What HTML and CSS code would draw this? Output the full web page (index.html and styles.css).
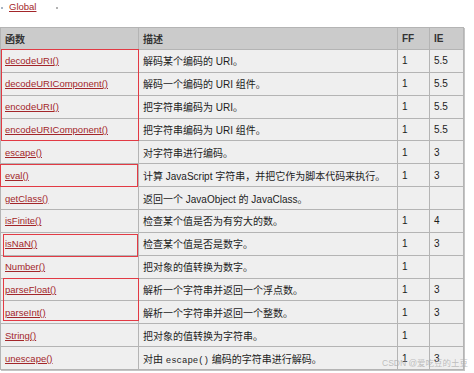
FILE: index.html
```html
<!DOCTYPE html>
<html lang="zh-CN">
<head>
<meta charset="utf-8">
<title>Global 函数</title>
<link rel="stylesheet" href="styles.css">
</head>
<body>
<div class="page">
  <div class="topbar">
    <span class="dot"></span>
    <a class="lnk global" href="#">Global</a>
    <span class="dot dot2"></span>
  </div>
  <table class="dataintable">
    <colgroup>
      <col class="c1"><col class="c2"><col class="c3"><col class="c4">
    </colgroup>
    <thead>
      <tr><th>函数</th><th>描述</th><th>FF</th><th>IE</th></tr>
    </thead>
    <tbody>
      <tr><td><a class="lnk" href="#">decodeURI()</a></td><td>解码某个编码的 URI。</td><td>1</td><td>5.5</td></tr>
      <tr><td><a class="lnk" href="#">decodeURIComponent()</a></td><td>解码一个编码的 URI 组件。</td><td>1</td><td>5.5</td></tr>
      <tr><td><a class="lnk" href="#">encodeURI()</a></td><td>把字符串编码为 URI。</td><td>1</td><td>5.5</td></tr>
      <tr><td><a class="lnk" href="#">encodeURIComponent()</a></td><td>把字符串编码为 URI 组件。</td><td>1</td><td>5.5</td></tr>
      <tr><td><a class="lnk" href="#">escape()</a></td><td>对字符串进行编码。</td><td>1</td><td>3</td></tr>
      <tr><td><a class="lnk" href="#">eval()</a></td><td>计算 JavaScript 字符串，并把它作为脚本代码来执行。</td><td>1</td><td>3</td></tr>
      <tr><td><a class="lnk" href="#">getClass()</a></td><td>返回一个 JavaObject 的 JavaClass。</td><td></td><td></td></tr>
      <tr><td><a class="lnk" href="#">isFinite()</a></td><td>检查某个值是否为有穷大的数。</td><td>1</td><td>4</td></tr>
      <tr><td><a class="lnk" href="#">isNaN()</a></td><td>检查某个值是否是数字。</td><td>1</td><td>3</td></tr>
      <tr><td><a class="lnk" href="#">Number()</a></td><td>把对象的值转换为数字。</td><td>1</td><td></td></tr>
      <tr><td><a class="lnk" href="#">parseFloat()</a></td><td>解析一个字符串并返回一个浮点数。</td><td>1</td><td>3</td></tr>
      <tr><td><a class="lnk" href="#">parseInt()</a></td><td>解析一个字符串并返回一个整数。</td><td>1</td><td>3</td></tr>
      <tr><td><a class="lnk" href="#">String()</a></td><td>把对象的值转换为字符串。</td><td>1</td><td></td></tr>
      <tr><td><a class="lnk" href="#">unescape()</a></td><td>对由 <code>escape()</code> 编码的字符串进行解码。</td><td>1</td><td>3</td></tr>
    </tbody>
  </table>

  <div class="mark mark-uri"></div>
  <div class="mark mark-eval"></div>
  <div class="mark mark-isnan"></div>
  <div class="mark mark-parse"></div>

  <div class="watermark">CSDN @爱吃豆的土豆</div>
</div>
</body>
</html>
```

FILE: styles.css
```css
html, body {
  margin: 0;
  padding: 0;
  background: #ffffff;
}

body {
  font-family: "Liberation Sans", Arial, "Noto Sans CJK SC", sans-serif;
  font-size: 10px;
  color: #222;
}

.page {
  position: relative;
  width: 474px;
  height: 373px;
  overflow: hidden;
}

.topbar {
  height: 27px;
  display: flex;
  align-items: flex-start;
  padding-top: 1px;
  box-sizing: border-box;
  line-height: 12px;
}

.dot {
  width: 2px;
  height: 2px;
  border-radius: 50%;
  background: #8a9bb0;
  margin-top: 6px;
  margin-left: 1px;
}

.dot2 {
  margin-left: 20px;
  background: #999;
}

.lnk {
  color: #a3262a;
  text-decoration: underline;
  font-family: "Liberation Sans", Arial, sans-serif;
  font-size: 9.5px;
}

.global {
  margin-left: 6px;
}

.dataintable {
  border-collapse: collapse;
  table-layout: fixed;
  width: 463px;
  border: 1px solid #9a9a9a;
  box-shadow: 1px 1px 0 #c4c4c4;
}

.c1 { width: 138px; }
.c2 { width: 259px; }
.c3 { width: 32px; }
.c4 { width: 34px; }

.dataintable th,
.dataintable td {
  border: 1px solid #b4b4b4;
  padding: 0 4px;
  text-align: left;
  vertical-align: middle;
  white-space: nowrap;
  overflow: hidden;
}

.dataintable th {
  height: 21px;
  background: #cbcbcb;
  font-weight: bold;
  font-size: 10px;
  color: #333;
  font-family: "Liberation Sans", "Noto Sans CJK SC", sans-serif;
}

.dataintable td {
  height: 21.86px;
  background: #efefef;
  font-family: "Liberation Sans", "Noto Sans CJK SC", sans-serif;
  font-size: 10px;
  color: #1c1c1c;
}

.dataintable td code {
  font-family: "Liberation Mono", monospace;
  font-size: 9px;
}

.mark {
  position: absolute;
  border: 1.5px solid #e23a44;
  box-sizing: border-box;
}

.mark-uri   { left: 1px; top: 49px;  width: 138px; height: 92px; }
.mark-eval  { left: 0px; top: 164px; width: 138px; height: 23px; }
.mark-isnan { left: 3px; top: 234px; width: 135px; height: 23px; }
.mark-parse { left: 3px; top: 278px; width: 136px; height: 43px; }

.watermark {
  position: absolute;
  left: 382px;
  top: 358px;
  font-family: "Liberation Sans", "Noto Sans CJK SC", sans-serif;
  font-size: 8.5px;
  line-height: 11px;
  color: rgba(175, 175, 175, 0.8);
  white-space: nowrap;
}
```
